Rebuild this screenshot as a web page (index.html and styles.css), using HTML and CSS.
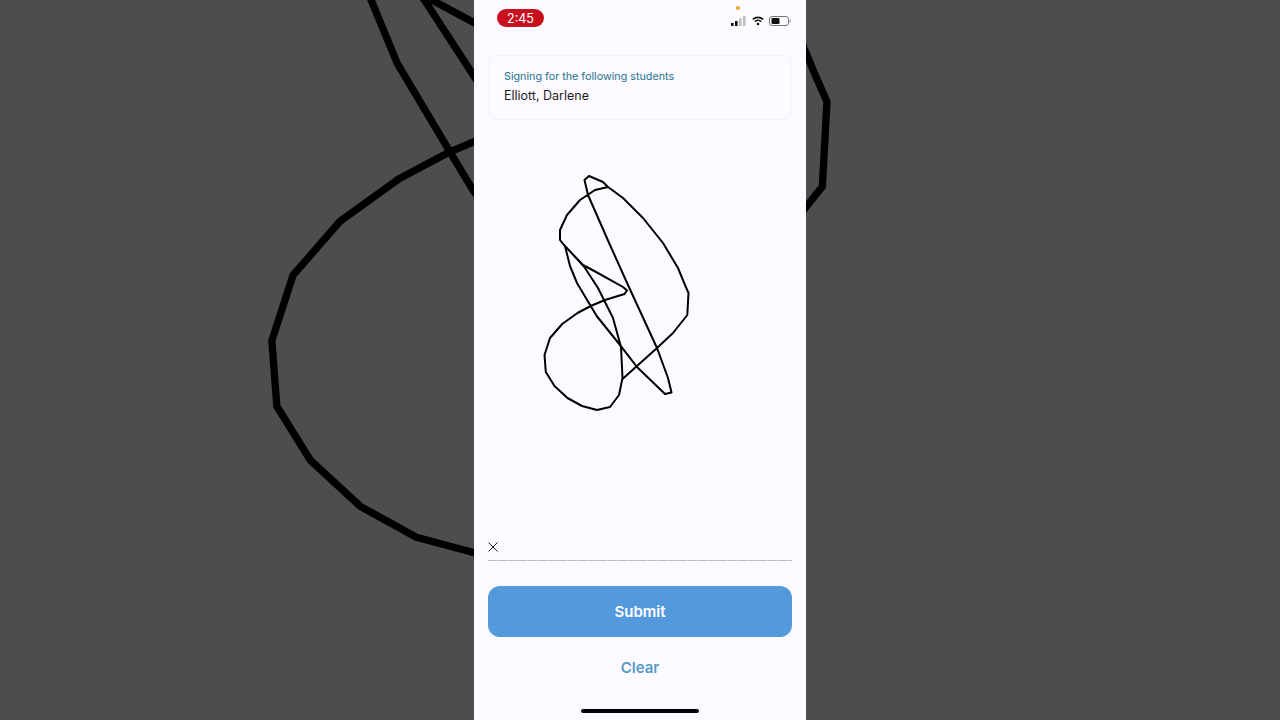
FILE: index.html
```html
<!DOCTYPE html>
<html lang="en">
<head>
<meta charset="utf-8">
<title>Signature</title>
<link rel="stylesheet" href="styles.css">
</head>
<body>
<svg class="backdrop" viewBox="0 0 1280 720" aria-hidden="true">
  <defs>
    <path id="sig" d="M622.5 379L657 348L673 333L687.3 315L688.5 293L685 285L678 268L663 243L643 218L623 198L608 187L595 190L580 200L567 215L560 230L560 240L564 245L583 265L597 272.5L623 287L627 290.5L624.5 294L605 300L590.7 306L577.5 313L562.2 324L550 338L544.5 355L545.8 372L554.5 386L567.5 398L582 406L597 410L610 407L619 395L622.5 378L621 347L613 318L598 288L584 266.5L565 246L570 266L577 283L590.7 306L596.7 316L620 345L637 367L665 394L671.5 392.5L668 378L657 348L628 285L610 245L588 195L584.5 180L589 176L603 182L608 187"/>
  </defs>
  <use href="#sig" class="backdrop-stroke" transform="translate(640 360) scale(3.855) translate(-640 -360)"/>
</svg>
<main class="phone">
  <header class="status">
    <span class="clock">2:45</span>
    <span class="mic-dot"></span>
    <div class="indicators">
      <svg class="signal" viewBox="0 0 15 10">
        <rect class="on" x="0" y="7" width="2.6" height="3"/>
        <rect class="on" x="4" y="5" width="2.6" height="5"/>
        <rect class="off" x="8" y="2.5" width="2.6" height="7.5"/>
        <rect class="off" x="12" y="0" width="2.6" height="10"/>
      </svg>
      <svg class="wifi" viewBox="0 0 12 10">
        <path d="M.8 3.3C3.8.7 8.2.7 11.2 3.3"/>
        <path d="M2.8 5.6C4.7 4 7.3 4 9.2 5.6"/>
        <circle cx="6" cy="8" r="1.3"/>
      </svg>
      <svg class="battery" viewBox="0 0 22 10">
        <rect class="shell" x=".5" y=".5" width="19" height="9" rx="2.5"/>
        <rect class="level" x="2.5" y="2" width="8" height="6" rx="1"/>
        <rect class="nub" x="20.5" y="3.5" width="1.2" height="3" rx=".6"/>
      </svg>
    </div>
  </header>

  <section class="card">
    <p class="card-label">Signing for the following students</p>
    <p class="card-name">Elliott, Darlene</p>
  </section>

  <svg class="canvas" viewBox="474 120 332 420" aria-label="Signature">
    <use href="#sig" class="ink"/>
  </svg>

  <div class="sign-row">
    <svg class="cross" viewBox="0 0 10 10"><path d="M.5.5L9.5 9.5M9.5.5L.5 9.5"/></svg>
  </div>
  <div class="sign-line"></div>

  <button class="submit" type="button">Submit</button>
  <button class="clear" type="button">Clear</button>

  <div class="home"></div>
</main>
</body>
</html>
```
FILE: styles.css
```css
* { box-sizing: border-box; }
html, body { height: 100%; }
body {
  margin: 0;
  height: 720px;
  overflow: hidden;
  background: #4d4d4d;
  display: flex;
  justify-content: center;
  font-family: Inter, "Liberation Sans", sans-serif;
}
.backdrop {
  position: absolute;
  left: 0;
  top: 0;
  width: 1280px;
  height: 720px;
}
.backdrop-stroke {
  fill: none;
  stroke: #000;
  stroke-width: 1.9;
  stroke-linejoin: round;
}
.phone {
  position: relative;
  width: 332px;
  height: 720px;
  background: #fcfafe;
  display: flex;
  flex-direction: column;
}
.status {
  position: relative;
  height: 55px;
  padding: 9px 16px 0 23px;
  display: flex;
  justify-content: space-between;
  align-items: flex-start;
}
.clock {
  width: 47px;
  height: 18px;
  border-radius: 9px;
  background: #c8101e;
  color: #fff;
  font-size: 12.5px;
  line-height: 19px;
  text-align: center;
}
.mic-dot {
  position: absolute;
  left: 262px;
  top: 6px;
  width: 3.5px;
  height: 3.5px;
  border-radius: 50%;
  background: #eea63a;
}
.indicators {
  display: flex;
  align-items: center;
  gap: 6px;
  padding-top: 7px;
}
.signal { width: 15px; height: 10px; }
.signal .on { fill: #111; }
.signal .off { fill: #bdbdbd; }
.wifi { width: 12px; height: 10px; }
.wifi path { fill: none; stroke: #111; stroke-width: 1.6; }
.wifi circle { fill: #111; }
.battery { width: 22px; height: 10px; margin-left: -1px; margin-right: -1px; }
.battery .shell { fill: none; stroke: #555; stroke-width: .8; }
.battery .level { fill: #111; }
.battery .nub { fill: #999; }
.card {
  margin: 0 14px;
  height: 65px;
  padding: 14px 15px 0;
  border: 1px solid #f5f3f7;
  border-radius: 8px;
}
.card-label {
  margin: 0;
  font-size: 10.75px;
  line-height: 14px;
  color: #1f7391;
}
.card-name {
  margin: 3px 0 0;
  font-size: 12.5px;
  line-height: 18px;
  color: #1c1c1e;
}
.canvas {
  display: block;
  width: 332px;
  height: 420px;
  flex: none;
}
.ink {
  fill: none;
  stroke: #000;
  stroke-width: 2;
  stroke-linejoin: round;
  stroke-linecap: round;
}
.sign-row {
  height: 20px;
  padding: 2px 14px 0;
}
.cross {
  display: block;
  width: 10px;
  height: 10px;
}
.cross path { fill: none; stroke: #222; stroke-width: 1; }
.sign-line {
  margin: 0 14px;
  height: 1px;
  background: repeating-linear-gradient(90deg, #bcbcbc 0 9px, #e4e3e6 9px 10px);
}
.submit {
  margin: 25px 14px 0;
  height: 51px;
  flex: none;
  border: 0;
  border-radius: 12px;
  background: #5499db;
  color: #fff;
  font: 600 15px Inter, "Liberation Sans", sans-serif;
}
.clear {
  margin: 18px 14px 0;
  height: 24px;
  flex: none;
  border: 0;
  background: none;
  color: #5499c9;
  font: 600 15px Inter, "Liberation Sans", sans-serif;
}
.home {
  width: 118px;
  height: 4px;
  border-radius: 2px;
  background: #000;
  margin: 30px auto 0;
  flex: none;
}
```
